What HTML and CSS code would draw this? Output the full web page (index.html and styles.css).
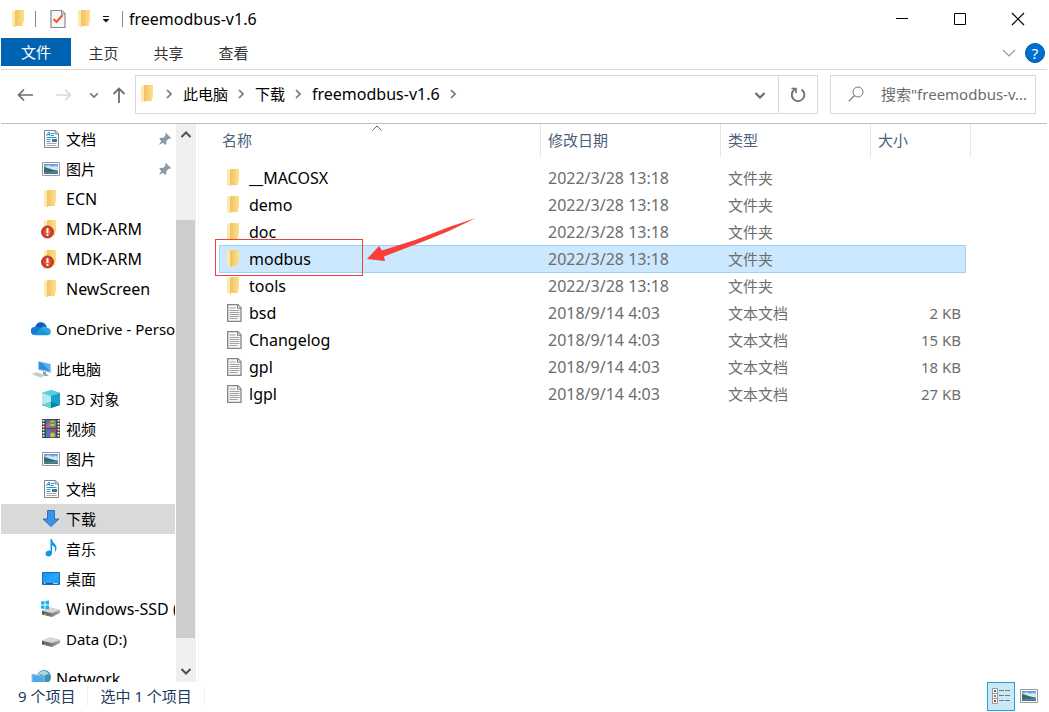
FILE: index.html
```html
<!DOCTYPE html>
<html lang="zh-CN">
<head>
<meta charset="utf-8">
<title>freemodbus-v1.6</title>
<link rel="stylesheet" href="styles.css">
</head>
<body>
<svg class="sprite" width="0" height="0" aria-hidden="true">
  <defs>
    <linearGradient id="gFold" x1="0" x2="1"><stop offset="0" stop-color="#eec262"/><stop offset="1" stop-color="#ffe08a"/></linearGradient>
    <linearGradient id="gSky" x1="0" x2="0" y1="0" y2="1"><stop offset="0" stop-color="#4f94e8"/><stop offset=".55" stop-color="#d5ecf9"/><stop offset=".6" stop-color="#7fa8b8"/><stop offset="1" stop-color="#356f93"/></linearGradient>
    <linearGradient id="gScreen" x1="0" x2="1" y1="0" y2="1"><stop offset="0" stop-color="#1b90f2"/><stop offset=".55" stop-color="#27a5ff"/><stop offset="1" stop-color="#1796f5"/></linearGradient>
    <linearGradient id="gDisk" x1="0" x2="1"><stop offset="0" stop-color="#4b4d4c"/><stop offset="1" stop-color="#a9abad"/></linearGradient>
    <radialGradient id="gErr"><stop offset="0" stop-color="#ee8a62"/><stop offset=".6" stop-color="#d9442c"/><stop offset="1" stop-color="#c8321f"/></radialGradient>
  </defs>
  <symbol id="folder" viewBox="0 0 12 18"><path d="M3 0h9v12.500l-1 0V16H3z" fill="url(#gFold)"/><path d="M0 0l3.500 1.500V17.500L0 16z" fill="#ffe9a6"/><path d="M3.500 2v15" stroke="#e8ba5c" stroke-width=".6"/></symbol>
  <symbol id="textfile" viewBox="0 0 15 18"><path d="M.7.7h10.300l3 3v13.600H.7z" fill="#f8f8f8" stroke="#858585" stroke-width="1.300"/><path d="M10.500.7v3.600H14" fill="#ddd" stroke="#858585"/><path d="M2.500 4h6M2.500 6.500h10M2.500 8.500h10M2.500 10.500h10M2.500 12.500h10M2.500 14.500h8" stroke="#a2a2a2"/></symbol>
  <symbol id="doc" viewBox="0 0 20 20"><path d="M3.500 1.500h11l3 3v14h-14z" fill="#fff" stroke="#858585"/><path d="M14 1.500V5h3.500" fill="#ddd" stroke="#858585"/><path d="M5.500 7l2-3.500h1L9 7M6.500 5.500H9" fill="none" stroke="#2589ce"/><path d="M10 4.500h3M10 6.500h3M5.500 8.500h10M5.500 10.500h4M5.500 12.500h4" stroke="#2697dc"/><path d="M11 10h5v3h-5z" fill="#3f7794"/><path d="M5.500 14.500h10M5.500 16.500h10" stroke="#aaa"/></symbol>
  <symbol id="picture" viewBox="0 0 20 20"><path d="M1.500 3.500h17v13h-17z" fill="#fff" stroke="#999"/><path d="M3 5h14v10H3z" fill="url(#gSky)"/><path d="M3 8c2 0 3 1 5 1.500s5 1.500 9 2.500l-8 1H3z" fill="#3c6c5c"/><path d="M4 8l3-2 4 2 4-1 2 2-5 1z" fill="#fff" opacity=".55"/></symbol>
  <symbol id="folder20" viewBox="0 0 20 20"><use href="#folder" x="3" y="1" width="12" height="18"/></symbol>
  <symbol id="folderErr" viewBox="0 0 20 20"><use href="#folder" x="3" y="1" width="12" height="18"/><path d="M3 16h10v4H3z" fill="#fff"/><circle cx="6.500" cy="13" r="6" fill="url(#gErr)" stroke="#b83b2b"/><path d="M6.500 9v5M6.500 15v2" stroke="#fff" stroke-width="1.800"/></symbol>
  <symbol id="cloud" viewBox="0 0 20 20"><path d="M4 9C5 2 14 1 16 9l-6 4z" fill="#0a5fb5"/><path d="M4 16a4 4 0 0 1-.5-8c3-1 5 0 7 2l-5 6z" fill="#167ad4"/><path d="M9 10c3-4 6-3 7-1 5 0 5 7 1 7H4z" fill="#2aa5ea"/><path d="M3 15.500L10 10l8 5.500-1 .8H4z" fill="#1d92dd"/></symbol>
  <symbol id="pc" viewBox="0 0 20 20"><path d="M7 2l13 3v9L7 11z" fill="#bcc5cb"/><path d="M8 3l11 2.600v7L8 10z" fill="#2390e7"/><path d="M11 3.700l8 1.900v7z" fill="#53b4f7"/><path d="M12 12.500l3 .7v2l3 1-3 1-5-1.500 2-.7z" fill="#8e9ba6"/><path d="M0 15l5-2 9 3-4 3z" fill="#d8dee2"/><path d="M3 15l8 2.500M5 14l7 2.500" stroke="#aab3b9" stroke-width=".7"/></symbol>
  <symbol id="cube" viewBox="0 0 20 20"><path d="M10 1l9 3v12l-9 3-9-3V4z" fill="#38b9ce"/><path d="M10 1l9 3-9 3-9-3z" fill="#58d1df"/><path d="M1 4l9 3v7l-9 2z" fill="#b7eaf0"/><path d="M10 7l9-3v12l-9-2z" fill="#17a2cf"/><path d="M1 16l9-3 9 3-9 3z" fill="#0e8497" /><path d="M1 16l9-3v6z" fill="#5ed3dd"/></symbol>
  <symbol id="film" viewBox="0 0 20 20"><path d="M1 0h18v19H1z" fill="#484848"/><path d="M2.500 1v18M17.500 1v18" stroke="#fff" stroke-width="1.800" stroke-dasharray="1.500 1.500"/><path d="M5 1h10v8H5zM5 10h10v8H5z" fill="#4173cf"/><circle cx="11.500" cy="4.500" r="3" fill="#e0b42e"/><path d="M5 6c2-2 3-1 5 2L8 9H5z" fill="#d45b72"/><path d="M9 4h5" stroke="#4c933d" stroke-width="1.500"/><circle cx="12.500" cy="11.500" r="2" fill="#cf4631"/><circle cx="11.500" cy="16" r="2.500" fill="#e0b42e"/></symbol>
  <symbol id="down" viewBox="0 0 20 20"><path d="M6.500 1.500h7v8.500h4.500l-8 7.500-8-7.500h4.500z" fill="#3a94e5" stroke="#2775c2"/></symbol>
  <symbol id="music" viewBox="0 0 20 20"><path d="M9.500 0h1.500c0 4 5 4.500 4.500 10-.5 1.500-1 2.500-2 3.500 1.500-4.500 0-6.500-2.500-7v7c0 6-7 4.500-6.500 1 .5-2.500 3-3.500 5-2.700z" fill="#1195ef"/></symbol>
  <symbol id="desktop" viewBox="0 0 20 20"><path d="M1.500 3.500h17v12h-17z" fill="url(#gScreen)" stroke="#176fb5"/><path d="M2 14.500h16" stroke="#0b5ca5"/><path d="M3 14.500h1.500M12 14.500h5" stroke="#fff" stroke-width=".7"/></symbol>
  <symbol id="disk" viewBox="0 0 20 20"><path d="M1 12l8-3.500 10 2.500v3l-8 4-10-2.500z" fill="url(#gDisk)"/><path d="M1 12l8-3.500 10 2.500-8 3z" fill="#d7d8d9"/><path d="M3 15l2 .5" stroke="#45d34e" stroke-width="1.500"/></symbol>
  <symbol id="winDisk" viewBox="0 0 20 20"><use href="#disk" width="20" height="20"/><path d="M0 2.500l3.500-.5v3.500H0zM4.500 2L8 1.500v4H4.500zM0 6.500h3.500V10L0 9.500zM4.500 6.500H8v4L4.500 10z" fill="#10b7ed"/></symbol>
  <symbol id="network" viewBox="0 0 20 20"><circle cx="13" cy="8" r="7" fill="#3f91bd"/><path d="M8 4c4-4 8-2 10 1-3 0-4 3-7 1s-2 3-4 2z" fill="#aed6dd"/><path d="M1 5l12 3v10L1 15z" fill="#42acf4" stroke="#adbcc4"/></symbol>
  <symbol id="pin" viewBox="0 0 14 14"><path d="M8 1l5 5-1.300 1-1-.3-2.500 2.500.3 2.500-1.300 1.200-6-6L2.500 5.700l2.500.3L7.600 3.600 7 2zM3.500 8.500l2 2L1 13z" fill="#8d99a3"/></symbol>
  <symbol id="chevR" viewBox="0 0 10 10"><path d="M3 1l4 4-4 4" fill="none" stroke="currentColor" stroke-width="1.700"/></symbol>
  <symbol id="chevD" viewBox="0 0 12 12"><path d="M1.500 4L6 8.500 10.500 4" fill="none" stroke="currentColor" stroke-width="2"/></symbol>
</svg>

<header class="titlebar">
  <svg class="folder-icon"><use href="#folder"/></svg>
  <span class="title-rule"></span>
  <button class="quick" aria-label="属性"><svg width="16" height="20" viewBox="0 0 16 20"><path d="M1 1.500h11l3 3v14H1z" fill="#f5f6f8" stroke="#8a8a8a" stroke-width="1.200"/><path d="M11.500 1.500V5H15" fill="#ddd" stroke="#8a8a8a"/><path d="M3.500 10l3 3L12.500 6" fill="none" stroke="#f05a22" stroke-width="2"/></svg></button>
  <button class="quick" aria-label="新建文件夹"><svg class="folder-icon"><use href="#folder"/></svg></button>
  <button class="quick more" aria-label="自定义快速访问工具栏"><svg width="8" height="8" viewBox="0 0 8 8"><path d="M1 1.500h6" stroke="#111"/><path d="M.5 4h7L4 7.500z" fill="#111"/></svg></button>
  <span class="title-rule"></span>
  <h1 class="title">freemodbus-v1.6</h1>
  <div class="window-buttons">
    <button aria-label="最小化"><svg width="14" height="14"><path d="M1 6.500h12" stroke="#000"/></svg></button>
    <button aria-label="最大化"><svg width="14" height="14"><path d="M1.500 1.500h11v11h-11z" fill="none" stroke="#000"/></svg></button>
    <button aria-label="关闭"><svg width="14" height="14"><path d="M1 1l12 12M13 1L1 13" stroke="#000" stroke-width="1.200"/></svg></button>
  </div>
</header>

<div class="ribbon">
  <button class="tab file-tab">文件</button>
  <button class="tab">主页</button>
  <button class="tab">共享</button>
  <button class="tab">查看</button>
  <button class="ribbon-toggle" aria-label="展开功能区"><svg width="14" height="14" viewBox="0 0 14 14"><path d="M1 4l6 6 6-6" fill="none" stroke="#999" stroke-width="1.200"/></svg></button>
  <button class="help" aria-label="帮助">?</button>
</div>

<div class="navbar">
  <button class="nav-btn" aria-label="后退"><svg width="16" height="14" viewBox="0 0 16 14"><path d="M16 7H1.500M7 1.500L1.500 7 7 12.500" fill="none" stroke="#6e6e6e" stroke-width="1.700"/></svg></button>
  <button class="nav-btn" aria-label="前进" disabled><svg width="16" height="14" viewBox="0 0 16 14"><path d="M0 7h14.500M9 1.500L14.500 7 9 12.500" fill="none" stroke="#d8d8d8" stroke-width="1.700"/></svg></button>
  <button class="nav-btn recent" aria-label="最近位置"><svg width="10" height="10"><use href="#chevD"/></svg></button>
  <button class="nav-btn up" aria-label="上移"><svg width="14" height="16" viewBox="0 0 14 16"><path d="M7 16V1.500M1.500 7L7 1.500 12.500 7" fill="none" stroke="#6e6e6e" stroke-width="1.800"/></svg></button>
  <div class="address">
    <svg class="folder-icon"><use href="#folder"/></svg>
    <svg class="crumb-arrow"><use href="#chevR"/></svg><a href="#">此电脑</a>
    <svg class="crumb-arrow"><use href="#chevR"/></svg><a href="#">下载</a>
    <svg class="crumb-arrow"><use href="#chevR"/></svg><a href="#" class="latin">freemodbus-v1.6</a>
    <svg class="crumb-arrow"><use href="#chevR"/></svg>
    <button class="address-drop" aria-label="以前的位置"><svg width="12" height="12"><use href="#chevD"/></svg></button>
    <button class="refresh" aria-label="刷新"><svg width="16" height="16" viewBox="0 0 16 16"><path d="M11.500 2.500a6.300 6.300 0 1 1-6.500-.2" fill="none" stroke="#6e6e6e" stroke-width="1.800"/><path d="M1.500 1.500h4.500V6" fill="none" stroke="#6e6e6e" stroke-width="1.600"/></svg></button>
  </div>
  <label class="search">
    <svg width="16" height="16" viewBox="0 0 16 16"><circle cx="10" cy="6" r="5" fill="none" stroke="#777"/><path d="M6.500 9.500L.7 15.300" stroke="#777" stroke-width="1.200"/></svg>
    <input type="text" aria-label="搜索" placeholder="搜索&quot;freemodbus-v...">
  </label>
</div>

<main class="main">
  <nav class="tree" aria-label="导航窗格">
    <a href="#" class="node"><svg><use href="#doc"/></svg>文档<svg class="pin"><use href="#pin"/></svg></a>
    <a href="#" class="node"><svg><use href="#picture"/></svg>图片<svg class="pin"><use href="#pin"/></svg></a>
    <a href="#" class="node latin"><svg><use href="#folder20"/></svg>ECN</a>
    <a href="#" class="node latin"><svg><use href="#folderErr"/></svg>MDK-ARM</a>
    <a href="#" class="node latin"><svg><use href="#folderErr"/></svg>MDK-ARM</a>
    <a href="#" class="node latin"><svg><use href="#folder20"/></svg>NewScreen</a>
    <a href="#" class="node root"><svg><use href="#cloud"/></svg>OneDrive - Personal</a>
    <a href="#" class="node root"><svg><use href="#pc"/></svg>此电脑</a>
    <a href="#" class="node"><svg><use href="#cube"/></svg>3D 对象</a>
    <a href="#" class="node"><svg><use href="#film"/></svg>视频</a>
    <a href="#" class="node"><svg><use href="#picture"/></svg>图片</a>
    <a href="#" class="node"><svg><use href="#doc"/></svg>文档</a>
    <a href="#" class="node current"><svg><use href="#down"/></svg>下载</a>
    <a href="#" class="node"><svg><use href="#music"/></svg>音乐</a>
    <a href="#" class="node"><svg><use href="#desktop"/></svg>桌面</a>
    <a href="#" class="node latin"><svg><use href="#winDisk"/></svg>Windows-SSD (C:)</a>
    <a href="#" class="node"><svg><use href="#disk"/></svg>Data (D:)</a>
    <a href="#" class="node root latin"><svg><use href="#network"/></svg>Network</a>
  </nav>
  <div class="scrollbar">
    <button aria-label="向上滚动"><svg class="flip" width="12" height="12"><use href="#chevD"/></svg></button>
    <div class="track"><div class="thumb"></div></div>
    <button aria-label="向下滚动"><svg width="12" height="12"><use href="#chevD"/></svg></button>
  </div>
  <section class="files">
    <table>
      <thead>
        <tr><th scope="col">名称<svg class="sort" width="10" height="6" viewBox="0 0 10 6"><path d="M.500 5.500L5 1l4.500 4.500" fill="none" stroke="#666"/></svg></th><th scope="col">修改日期</th><th scope="col">类型</th><th scope="col">大小</th></tr>
      </thead>
      <tbody>
        <tr><td class="latin"><svg class="folder-icon"><use href="#folder"/></svg>__MACOSX</td><td class="latin">2022/3/28 13:18</td><td>文件夹</td><td></td></tr>
        <tr><td class="latin"><svg class="folder-icon"><use href="#folder"/></svg>demo</td><td class="latin">2022/3/28 13:18</td><td>文件夹</td><td></td></tr>
        <tr><td class="latin"><svg class="folder-icon"><use href="#folder"/></svg>doc</td><td class="latin">2022/3/28 13:18</td><td>文件夹</td><td></td></tr>
        <tr class="selected"><td class="latin"><svg class="folder-icon"><use href="#folder"/></svg>modbus<span class="callout"></span><svg class="arrow" width="110" height="46" viewBox="0 0 110 46"><path d="M0 41L12 28 15 32.500 48 22 60 17.500 82 9 109 0 82 13 60 22 17 38.500 18 43z" fill="#fa3e3a"/></svg></td><td class="latin">2022/3/28 13:18</td><td>文件夹</td><td></td></tr>
        <tr><td class="latin"><svg class="folder-icon"><use href="#folder"/></svg>tools</td><td class="latin">2022/3/28 13:18</td><td>文件夹</td><td></td></tr>
        <tr><td class="latin"><svg class="file-icon"><use href="#textfile"/></svg>bsd</td><td class="latin">2018/9/14 4:03</td><td>文本文档</td><td>2 KB</td></tr>
        <tr><td class="latin"><svg class="file-icon"><use href="#textfile"/></svg>Changelog</td><td class="latin">2018/9/14 4:03</td><td>文本文档</td><td>15 KB</td></tr>
        <tr><td class="latin"><svg class="file-icon"><use href="#textfile"/></svg>gpl</td><td class="latin">2018/9/14 4:03</td><td>文本文档</td><td>18 KB</td></tr>
        <tr><td class="latin"><svg class="file-icon"><use href="#textfile"/></svg>lgpl</td><td class="latin">2018/9/14 4:03</td><td>文本文档</td><td>27 KB</td></tr>
      </tbody>
    </table>
  </section>
</main>

<footer class="status">
  <span>9 个项目</span>
  <span>选中 1 个项目</span>
  <div class="views">
    <button class="view active" aria-label="详细信息"><svg width="18" height="16" viewBox="0 0 18 16"><path d="M.500.500h5v15h-5zM.5 5.500h5M.5 10.500h5" fill="#fff" stroke="#999"/><path d="M2 2h2v2H2z" fill="#456f98"/><path d="M2 7h2v2H2z" fill="#7c8536"/><path d="M2 12h2v2H2z" fill="#b4321f"/><path d="M7 2.500h5m1 0h5M7 7.500h5m1 0h5M7 12.500h5m1 0h5" stroke="#777"/></svg></button>
    <button class="view" aria-label="大图标"><svg width="20" height="20"><use href="#picture"/></svg></button>
  </div>
</footer>
</body>
</html>
```

FILE: styles.css
```css
* {
  box-sizing: border-box;
}

body {
  display: flex;
  flex-direction: column;
  height: 100vh;
  margin: 0;
  padding: 0 2px 0 1px;
  overflow: hidden;
  background: #fff;
  color: #000;
  font-family: "Noto Sans", "Noto Sans CJK SC", sans-serif;
  font-size: 15px;
  line-height: 20px;
}

button,
input {
  margin: 0;
  padding: 0;
  border: 0;
  background: none;
  color: inherit;
  font: inherit;
}

button {
  display: flex;
  align-items: center;
  justify-content: center;
}

a {
  color: inherit;
  text-decoration: none;
}

svg {
  flex: none;
}

.latin {
  font-size: 16px;
}

.sprite {
  position: absolute;
}

.folder-icon {
  width: 12px;
  height: 18px;
}

.file-icon {
  width: 15px;
  height: 18px;
}

/* Title bar */
.titlebar {
  display: flex;
  flex: none;
  align-items: center;
  height: 38px;
  padding-left: 11px;
}

.title-rule {
  width: 1px;
  height: 16px;
  margin-left: 11px;
  background: #888;
}

.quick {
  margin-left: 14px;
}

.quick + .quick {
  margin-left: 12px;
}

.more + .title-rule {
  margin-left: 12px;
}

.title {
  margin: 0 0 0 6px;
  font-size: 16px;
  font-weight: 400;
}

.window-buttons {
  display: flex;
  margin-left: auto;
}

.window-buttons button {
  width: 58px;
  height: 38px;
}

/* Ribbon */
.ribbon {
  display: flex;
  flex: none;
  align-items: flex-start;
  height: 32px;
  border-bottom: 1px solid #dadbdc;
}

.tab {
  width: 65px;
  height: 30px;
  color: #333;
}

.file-tab {
  width: 70px;
  height: 28px;
  background: #0063b1;
  color: #fff;
}

.ribbon-toggle {
  width: 14px;
  height: 30px;
  margin: 0 9px 0 auto;
}

.help {
  width: 20px;
  height: 20px;
  margin: 5px 2px 0 0;
  border: 1px solid #004f9c;
  border-radius: 50%;
  background: #006fd0;
  color: #fff;
}

/* Navigation row */
.navbar {
  display: flex;
  flex: none;
  align-items: center;
  height: 54px;
  padding: 0 11px 4px 4px;
  border-bottom: 1px solid #bfbfbf;
}

.nav-btn {
  width: 39px;
  height: 38px;
  color: #777;
}

.recent {
  width: 22px;
}

.up {
  width: 28px;
  margin-right: 2px;
}

.address {
  display: flex;
  flex: 1;
  align-items: center;
  height: 39px;
  padding: 0 0 2px 5px;
  border: 1px solid #d9d9d9;
  white-space: nowrap;
}

.crumb-arrow {
  width: 10px;
  height: 10px;
  margin: 0 9px 0 8px;
  color: #777;
}

.address .folder-icon {
  margin-right: 3px;
}

.address-drop {
  width: 36px;
  height: 37px;
  margin: 2px 0 0 auto;
  color: #666;
}

.refresh {
  width: 39px;
  height: 37px;
  margin-top: 2px;
  border-left: 1px solid #d9d9d9;
}

.search {
  display: flex;
  align-items: center;
  gap: 17px;
  width: 206px;
  height: 39px;
  margin-left: 12px;
  padding: 0 0 2px 17px;
  border: 1px solid #d9d9d9;
}

.search input {
  flex: 1;
  min-width: 0;
  outline: none;
}

.search input::placeholder {
  color: #6d6d6d;
  opacity: 1;
}

/* Panes */
.main {
  display: flex;
  flex: 1;
  min-height: 0;
}

.tree {
  flex: none;
  width: 174px;
  overflow: hidden;
}

.node {
  display: flex;
  align-items: center;
  gap: 5px;
  height: 30px;
  padding-left: 40px;
  white-space: nowrap;
}

.node svg {
  width: 20px;
  height: 20px;
}

.node .pin {
  width: 14px;
  height: 14px;
  margin: 0 3px 0 auto;
}

.root {
  margin-top: 10px;
  padding-left: 30px;
}

.current {
  background: #d9d9d9;
}

.scrollbar {
  display: flex;
  flex: none;
  flex-direction: column;
  width: 20px;
  margin-left: 1px;
  background: #f0f0f0;
  color: #505050;
}

.scrollbar button {
  height: 22px;
}

.flip {
  transform: rotate(180deg);
}

.track {
  display: flex;
  flex: 1;
  flex-direction: column;
  justify-content: flex-end;
  padding: 0 1px 22px 0;
}

.thumb {
  height: 85%;
  background: #cdcdcd;
}

.files {
  flex: 1;
  min-width: 0;
  margin-left: 2px;
  padding-left: 20px;
  border-left: 1px solid #f5f5f5;
}

/* File list */
table,
thead,
tbody {
  display: block;
}

tr {
  display: grid;
  grid-template-columns: 321px 180px 150px 96px;
  width: max-content;
  height: 27px;
}

thead tr {
  grid-template-columns: 322px 180px 150px 100px;
  height: 33px;
  margin-bottom: 7px;
}

th,
td {
  display: flex;
  align-items: center;
  padding: 0 0 0 8px;
  white-space: nowrap;
}

th {
  position: relative;
  padding: 0 0 2px 7px;
  border-right: 1px solid #e5e5e5;
  color: #4c607a;
  font-weight: 400;
}

th:first-child {
  padding-left: 3px;
}

.sort {
  position: absolute;
  top: 1px;
  left: 153px;
}

td {
  color: #6d6d6d;
}

td:first-child {
  position: relative;
  color: #000;
}

td:last-child {
  justify-content: flex-end;
  padding-right: 5px;
}

td .folder-icon {
  margin-right: 10px;
}

td .file-icon {
  margin-right: 7px;
}

.selected {
  background: #cce8ff;
  box-shadow: inset 0 1px #99d1ff, 0 1px #99d1ff, inset 1px 0 #99d1ff, inset -1px 0 #99d1ff;
}

.callout {
  position: absolute;
  top: -6px;
  left: -4px;
  width: 148px;
  height: 37px;
  border: 1px solid #f2403c;
}

.arrow {
  position: absolute;
  top: -27px;
  left: 148px;
}

/* Status bar */
.status {
  display: flex;
  flex: none;
  align-items: center;
  height: 30px;
  padding: 0 0 2px 17px;
  color: #1e395b;
}

.status span {
  padding-right: 12px;
  border-right: 1px solid #f0f0f0;
}

.status span + span {
  padding-left: 12px;
}

.views {
  display: flex;
  margin-left: auto;
  padding-right: 4px;
}

.view {
  width: 28px;
  height: 29px;
}

.active {
  border: 1px solid #26a0da;
  background: #cbe8f6;
}
```
